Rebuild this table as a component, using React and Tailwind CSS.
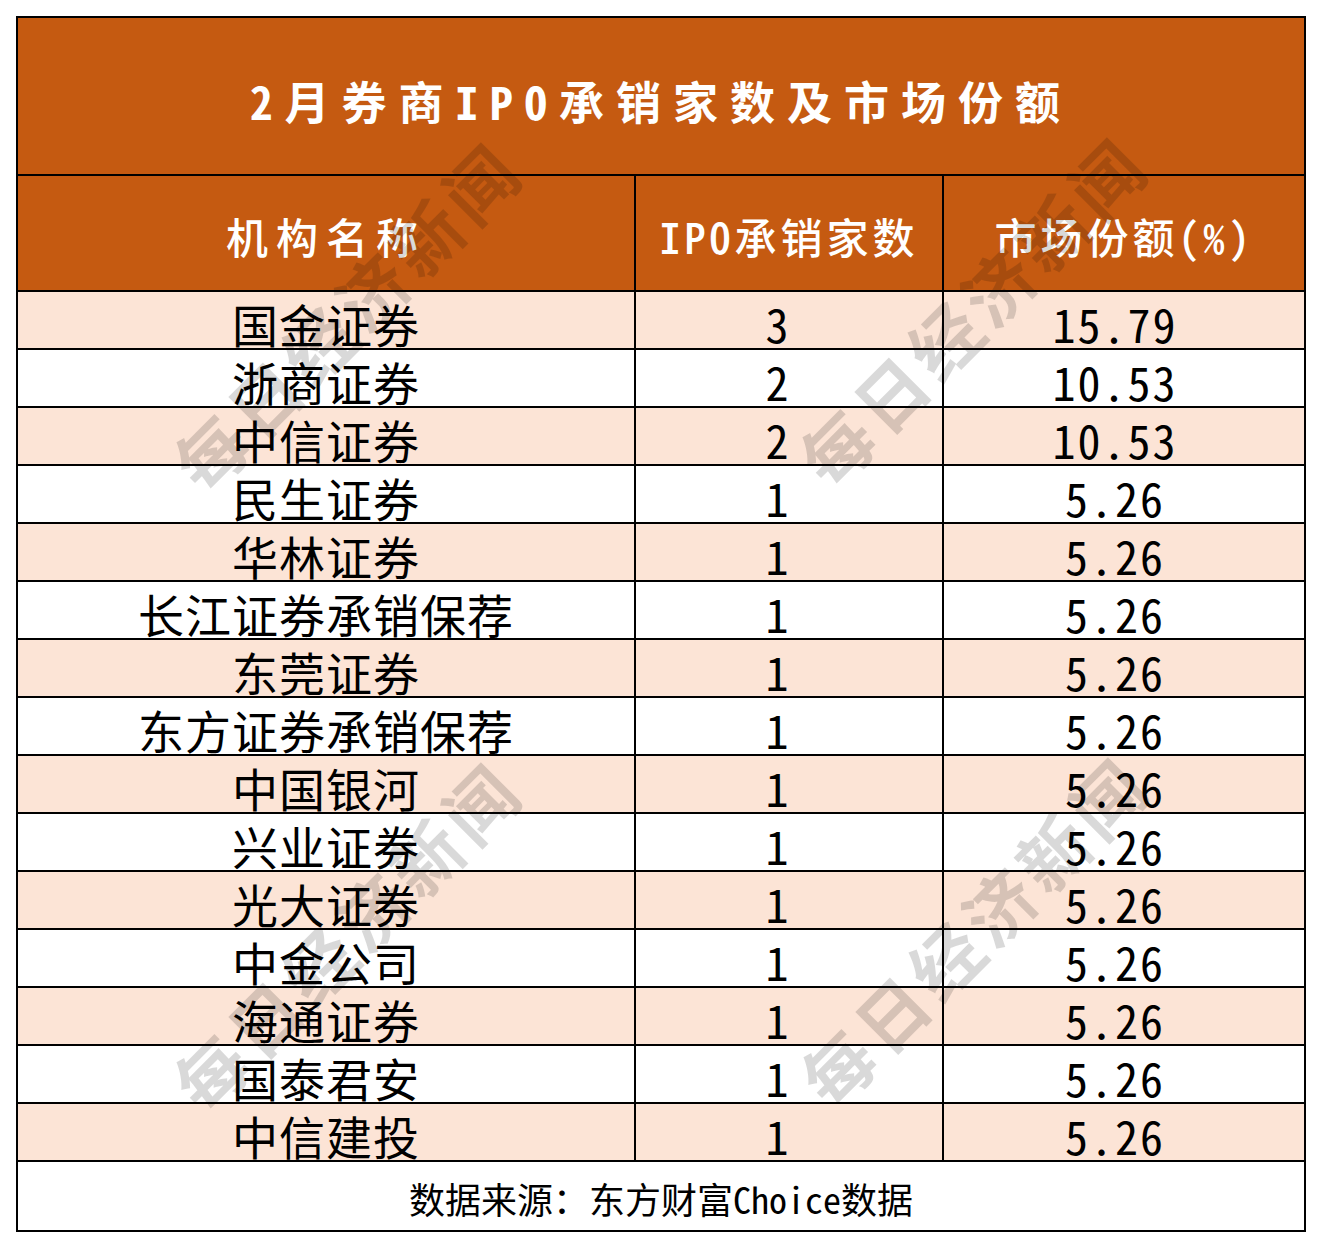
const rows = [
  ["国金证券", "3", "15.79"],
  ["浙商证券", "2", "10.53"],
  ["中信证券", "2", "10.53"],
  ["民生证券", "1", "5.26"],
  ["华林证券", "1", "5.26"],
  ["长江证券承销保荐", "1", "5.26"],
  ["东莞证券", "1", "5.26"],
  ["东方证券承销保荐", "1", "5.26"],
  ["中国银河", "1", "5.26"],
  ["兴业证券", "1", "5.26"],
  ["光大证券", "1", "5.26"],
  ["中金公司", "1", "5.26"],
  ["海通证券", "1", "5.26"],
  ["国泰君安", "1", "5.26"],
  ["中信建投", "1", "5.26"],
];

const font = "font-['Noto_Sans_CJK_SC',sans-serif] [font-feature-settings:'hwid']";

const Watermark = ({ cls }) => (
  <div
    className={`pointer-events-none absolute -rotate-45 whitespace-nowrap text-[70px] leading-none font-bold tracking-[6px] text-black/15 ${cls}`}
  >
    每日经济新闻
  </div>
);

const App = () => {
  return (
    <div className={`min-h-screen bg-white p-4 leading-none ${font}`}>
      <div className="relative w-[1290px] border-2 border-black">
        <div className="flex h-[158px] items-center justify-center border-b-2 border-black bg-[#C55A11] pt-[8px] text-[45px] font-bold tracking-[12px] text-white">
          2月券商IPO承销家数及市场份额
        </div>

        <div className="grid h-[116px] grid-cols-[618px_308px_1fr] border-b-2 border-black bg-[#C55A11] text-[42px] font-medium text-white">
          <div className="flex items-center justify-center border-r-2 border-black pt-[6px] tracking-[8px]">机构名称</div>
          <div className="flex items-center justify-center border-r-2 border-black pt-[6px] tracking-[4px]">IPO承销家数</div>
          <div className="flex items-center justify-center pt-[6px] tracking-[4px]">市场份额(%)</div>
        </div>

        {rows.map((r, i) => (
          <div
            key={i}
            className={`grid h-[58px] grid-cols-[618px_308px_1fr] border-b-2 border-black text-[46px] text-black ${
              i % 2 === 0 ? "bg-[#FCE4D6]" : "bg-white"
            }`}
          >
            <div className="flex items-center justify-center border-r-2 border-black pt-[6px] tracking-[1px]">{r[0]}</div>
            <div className="flex items-center justify-center border-r-2 border-black pt-[6px] pr-[24px]">{r[1]}</div>
            <div className="flex items-center justify-center pt-[6px] pr-[18px] tracking-[2px]">{r[2]}</div>
          </div>
        ))}

        <div className="flex h-[68px] items-center justify-center pt-[4px] text-[36px] text-black">
          数据来源：东方财富Choice数据
        </div>

        <Watermark cls="left-[100px] top-[262px]" />
        <Watermark cls="left-[726px] top-[257px]" />
        <Watermark cls="left-[100px] top-[882px]" />
        <Watermark cls="left-[727px] top-[877px]" />
      </div>
    </div>
  );
};

export default App;
